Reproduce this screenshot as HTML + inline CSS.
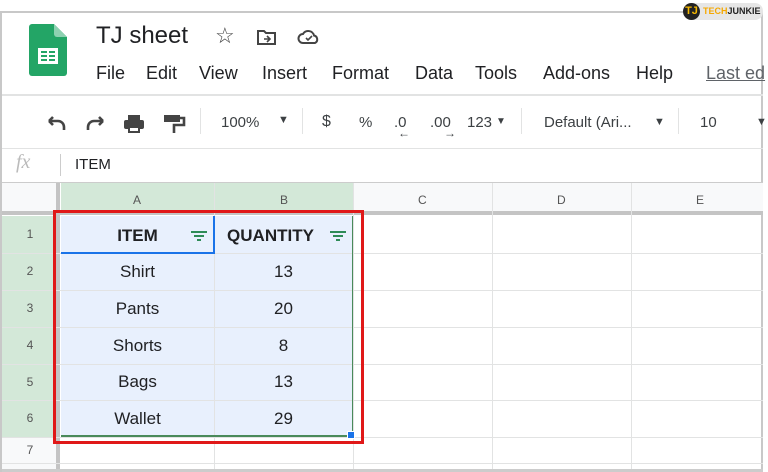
<!DOCTYPE html><html><head><style>
*{margin:0;padding:0;box-sizing:border-box}
body{width:768px;height:472px;background:#fff;position:relative;overflow:hidden;font-family:"Liberation Sans",Arial,sans-serif;color:#202124}
.a{position:absolute}
.menu span{position:absolute;top:0;font-size:18px}
.tb{position:absolute;font-size:15px;color:#3c4043}
.hl{position:absolute;background:#e2e3e3}
</style></head><body>
<div class="a" style="left:0;top:11px;width:763px;height:461px;border-top:2px solid #c8c8c8;border-left:2px solid #c8c8c8;border-right:2px solid #c8c8c8"></div>
<div class="a" style="left:683px;top:3px;width:80px;height:17px;background:#e6e6e6;border-radius:8px"></div>
<div class="a" style="left:683px;top:3px;width:17px;height:17px;border-radius:50%;background:#222;color:#f5b800;font-size:11px;font-weight:bold;text-align:center;line-height:17px">TJ</div>
<div class="a" style="left:703px;top:6px;font-size:9px;font-weight:bold;color:#222"><span style="color:#f5a800">TECH</span>JUNKIE</div>
<svg class="a" style="left:29px;top:24px" width="38" height="52" viewBox="0 0 38 52"><path d="M3 0h22l13 13v36a3 3 0 0 1-3 3H3a3 3 0 0 1-3-3V3a3 3 0 0 1 3-3z" fill="#23a566"/><path d="M25 0l13 13H28a3 3 0 0 1-3-3z" fill="#8ed1b1"/><rect x="9" y="24" width="20" height="16" fill="#fff"/><g fill="#23a566"><rect x="12" y="27" width="6" height="2"/><rect x="20" y="27" width="6" height="2"/><rect x="12" y="31" width="6" height="2"/><rect x="20" y="31" width="6" height="2"/><rect x="12" y="35" width="6" height="2"/><rect x="20" y="35" width="6" height="2"/></g></svg>
<div class="a" style="left:96px;top:22px;font-size:24px">TJ sheet</div>
<div class="a" style="left:215px;top:23px;font-size:22px;color:#444">☆</div>
<svg class="a" style="left:256px;top:28px" width="22" height="18"><path d="M2 3h6l2 2h9v11H2z" fill="none" stroke="#444" stroke-width="2"/><path d="M8 11h6M11 8l3 3-3 3" fill="none" stroke="#444" stroke-width="1.6"/></svg>
<svg class="a" style="left:297px;top:28px" width="24" height="18"><path d="M6 15a4.5 4.5 0 0 1 0-9 6 6 0 0 1 11 1.5 4 4 0 0 1 1 7.5z" fill="none" stroke="#444" stroke-width="2"/><path d="M9 10l2 2 4-4" fill="none" stroke="#444" stroke-width="1.6"/></svg>
<div class="menu a" style="left:0;top:63px;width:768px">
<span style="left:96px">File</span><span style="left:146px">Edit</span><span style="left:199px">View</span><span style="left:262px">Insert</span><span style="left:332px">Format</span><span style="left:415px">Data</span><span style="left:475px">Tools</span><span style="left:543px">Add-ons</span><span style="left:636px">Help</span><span style="left:706px;color:#5f6368;text-decoration:underline">Last ed</span></div>
<div class="hl" style="left:2px;top:94px;width:761px;height:2px"></div>
<svg class="a" style="left:44px;top:113px" width="150" height="22"><path d="M5 8h9a6 6 0 0 1 6 6v3M5 8l4-4M5 8l4 4" fill="none" stroke="#444" stroke-width="2.6"/><path d="M59 8h-9a6 6 0 0 0-6 6v3M59 8l-4-4M59 8l-4 4" fill="none" stroke="#444" stroke-width="2.6"/><rect x="84" y="2" width="12" height="5" fill="#444"/><rect x="80" y="7" width="20" height="9" rx="2" fill="#444"/><rect x="84" y="13" width="12" height="7" fill="#444"/><rect x="86" y="15" width="8" height="3" fill="#fff"/><rect x="120" y="2" width="16" height="7" fill="#444"/><path d="M136 5h4v7h-10v8" fill="none" stroke="#444" stroke-width="2.6"/></svg>
<div class="hl" style="left:200px;top:108px;width:1px;height:26px"></div>
<div class="tb" style="left:221px;top:114px">100%</div>
<div class="tb" style="left:278px;top:114px;font-size:11px">▼</div>
<div class="hl" style="left:302px;top:108px;width:1px;height:26px"></div>
<div class="tb" style="left:322px;top:113px;font-size:16px">$</div>
<div class="tb" style="left:359px;top:114px">%</div>
<div class="tb" style="left:394px;top:114px">.0</div>
<div class="tb" style="left:398px;top:126px;font-size:12px">←</div>
<div class="tb" style="left:430px;top:114px">.00</div>
<div class="tb" style="left:444px;top:126px;font-size:12px">→</div>
<div class="tb" style="left:467px;top:114px">123</div><div class="tb" style="left:496px;top:116px;font-size:10px">▼</div>
<div class="hl" style="left:521px;top:108px;width:1px;height:26px"></div>
<div class="tb" style="left:544px;top:114px">Default (Ari...</div>
<div class="tb" style="left:654px;top:116px;font-size:11px">▼</div>
<div class="hl" style="left:678px;top:108px;width:1px;height:26px"></div>
<div class="tb" style="left:700px;top:114px">10</div>
<div class="tb" style="left:756px;top:116px;font-size:11px">▼</div>
<div class="hl" style="left:2px;top:148px;width:761px;height:1px"></div>
<div class="a" style="left:16px;top:151px;font-size:20px;font-style:italic;font-family:'Liberation Serif',serif;color:#bbb">fx</div>
<div class="hl" style="left:60px;top:154px;width:1px;height:22px;background:#ccc"></div>
<div class="a" style="left:75px;top:156px;font-size:15px">ITEM</div>
<div class="hl" style="left:2px;top:182px;width:761px;height:1px;background:#ccc"></div>
<div class="a" style="left:2px;top:183px;width:56px;height:32px;background:#f8f9fa"></div>
<div class="a" style="left:61px;top:183px;width:292px;height:30px;background:#d3e8d8"></div>
<div class="a" style="left:353px;top:183px;width:410px;height:30px;background:#f8f9fa"></div>
<div class="a" style="left:2px;top:216px;width:56px;height:221px;background:#d3e8d8"></div>
<div class="a" style="left:2px;top:437px;width:56px;height:35px;background:#f8f9fa"></div>
<div class="a" style="left:61px;top:216px;width:292px;height:221px;background:#e8f0fd"></div>
<div class="hl" style="left:2px;top:211px;width:761px;height:4px;background:#c4c4c4"></div>
<div class="hl" style="left:56px;top:183px;width:4px;height:289px;background:#c4c4c4"></div>
<div class="a" style="left:61px;top:183px;width:702px;font-size:12px;color:#555">
<span class="a" style="left:72px;top:10px">A</span><span class="a" style="left:219px;top:10px">B</span><span class="a" style="left:357px;top:10px">C</span><span class="a" style="left:496px;top:10px">D</span><span class="a" style="left:635px;top:10px">E</span></div>
<div class="hl" style="left:214px;top:183px;width:1px;height:289px"></div>
<div class="hl" style="left:353px;top:183px;width:1px;height:289px"></div>
<div class="hl" style="left:492px;top:183px;width:1px;height:289px"></div>
<div class="hl" style="left:631px;top:183px;width:1px;height:289px"></div>
<div class="hl" style="left:2px;top:253px;width:761px;height:1px"></div>
<div class="hl" style="left:2px;top:290px;width:761px;height:1px"></div>
<div class="hl" style="left:2px;top:327px;width:761px;height:1px"></div>
<div class="hl" style="left:2px;top:364px;width:761px;height:1px"></div>
<div class="hl" style="left:2px;top:400px;width:761px;height:1px"></div>
<div class="hl" style="left:2px;top:437px;width:761px;height:1px"></div>
<div class="hl" style="left:2px;top:463px;width:761px;height:1px"></div>
<div class="hl" style="left:2px;top:469px;width:761px;height:3px;background:#ccc"></div>
<div class="a" style="left:2px;top:216px;width:56px;font-size:12px;color:#555;text-align:center">
<div style="height:37px;line-height:37px">1</div><div style="height:37px;line-height:37px">2</div><div style="height:37px;line-height:37px">3</div><div style="height:37px;line-height:37px">4</div><div style="height:36px;line-height:36px">5</div><div style="height:37px;line-height:37px">6</div><div style="height:26px;line-height:26px">7</div></div>
<div class="a" style="left:61px;top:216px;width:292px;font-size:17px;text-align:center">
<div style="display:flex;height:40px;line-height:40px;font-weight:bold"><div style="width:153px">ITEM</div><div style="width:139px;padding-right:26px">QUANTITY</div></div>
<div style="display:flex;height:37px;line-height:37px;margin-top:-3px"><div style="width:153px">Shirt</div><div style="width:139px">13</div></div>
<div style="display:flex;height:37px;line-height:37px"><div style="width:153px">Pants</div><div style="width:139px">20</div></div>
<div style="display:flex;height:37px;line-height:37px"><div style="width:153px">Shorts</div><div style="width:139px">8</div></div>
<div style="display:flex;height:36px;line-height:36px"><div style="width:153px">Bags</div><div style="width:139px">13</div></div>
<div style="display:flex;height:37px;line-height:37px"><div style="width:153px">Wallet</div><div style="width:139px">29</div></div></div>
<svg class="a" style="left:190px;top:230px" width="20" height="12"><path d="M1 2h16M4 6h10M7 10h4" stroke="#2e8b57" stroke-width="2"/></svg>
<svg class="a" style="left:329px;top:230px" width="20" height="12"><path d="M1 2h16M4 6h10M7 10h4" stroke="#2e8b57" stroke-width="2"/></svg>
<div class="a" style="left:61px;top:216px;width:154px;height:38px;border-right:2px solid #1a73e8;border-bottom:2px solid #1a73e8"></div>
<div class="a" style="left:61px;top:216px;width:292px;height:221px;border-right:1px solid #4a8a5a;border-bottom:2px solid #4a8a5a"></div>
<div class="a" style="left:347px;top:431px;width:8px;height:8px;background:#1a73e8;border:1px solid #fff"></div>
<div class="a" style="left:53px;top:210px;width:311px;height:234px;border:3px solid #e01818"></div>
</body></html>
